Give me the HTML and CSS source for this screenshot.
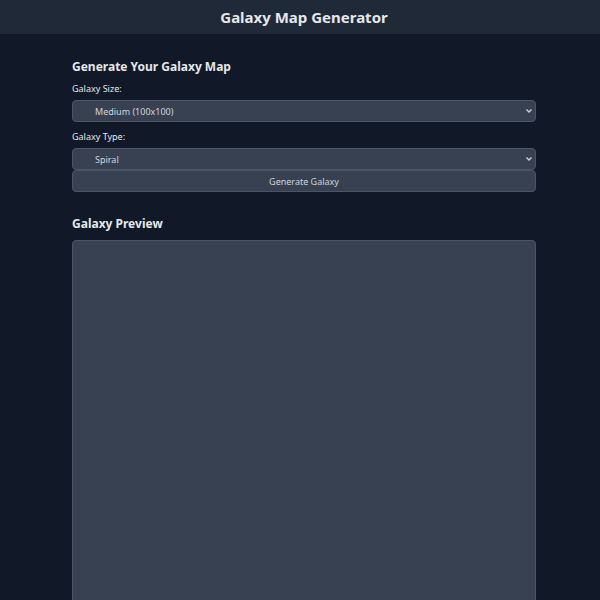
FILE: index.html
```html
<!DOCTYPE html>
<html>
  <head>
    <meta charset="utf-8">
    <title>Galaxy Map Generator</title>
    <link rel="stylesheet" href="styles.css">
  </head>
<body>

  <header class="topbar">
    <h1>Galaxy Map Generator</h1>
  </header>

  <main class="content">
    <section class="controls">
      <h2>Generate Your Galaxy Map</h2>
      <form name="galaxy" class="galaxy-form" onsubmit="return false;">
        <label for="size">Galaxy Size:</label>
        <select id="size" name="size">
          <option value="50">Small (50x50)</option>
          <option value="100" selected>Medium (100x100)</option>
          <option value="200">Large (200x200)</option>
        </select>
        <label for="type">Galaxy Type:</label>
        <select id="type" name="type" class="joined">
          <option value="spiral" selected>Spiral</option>
          <option value="elliptical">Elliptical</option>
          <option value="irregular">Irregular</option>
        </select>
        <button type="submit">Generate Galaxy</button>
      </form>
    </section>

    <section class="preview">
      <h2>Galaxy Preview</h2>
      <div id="galaxy_canvas" class="canvas"></div>
    </section>
  </main>

</body>
</html>
```

FILE: styles.css
```css
body {
  margin: 0;
  font-family: "Noto Sans", "Open Sans", sans-serif;
  background-color: #111827;
  color: #e5e7eb;
}

.topbar {
  background-color: #1f2937;
  height: 34px;
  padding-left: 8px;
  display: flex;
  align-items: center;
  justify-content: center;
}
.topbar h1 {
  margin: 0;
  font-size: 15px;
  font-weight: 700;
}

.content {
  width: 464px;
  margin-left: 72px;
  padding-top: 23px;
}

h2 {
  font-size: 12px;
  line-height: 20px;
  font-weight: 700;
  margin: 0 0 6px 0;
}

.galaxy-form {
  display: flex;
  flex-direction: column;
}
.galaxy-form label {
  font-size: 9px;
  line-height: 12px;
  margin: 0 0 5px 0;
}
.galaxy-form select,
.galaxy-form button {
  height: 22px;
  font-family: inherit;
  font-size: 9px;
  color: #d1d5db;
  background-color: #374151;
  border: 1px solid #4b5563;
  border-radius: 4px;
}
/* small chevron on the right instead of the native arrow */
.galaxy-form select {
  -webkit-appearance: none;
  appearance: none;
  padding: 0 0 0 22px;
  margin-bottom: 9px;
  background-image: url("data:image/svg+xml,%3Csvg xmlns='http://www.w3.org/2000/svg' width='6' height='4' viewBox='0 0 6 4'%3E%3Cpath d='M0.5 0.5 L3 3 L5.5 0.5' fill='none' stroke='%23d1d5db' stroke-width='1.3'/%3E%3C/svg%3E");
  background-repeat: no-repeat;
  background-position: right 3px center;
  background-size: 6px 4px;
}
.galaxy-form select.joined {
  margin-bottom: 0;
}
.galaxy-form button {
  cursor: pointer;
}
.galaxy-form button:hover {
  background-color: #4b5563;
}

.preview {
  margin-top: 22px;
}
.canvas {
  height: 400px;
  background-color: #374151;
  border: 1px solid #4b5563;
  border-radius: 4px;
}
```
